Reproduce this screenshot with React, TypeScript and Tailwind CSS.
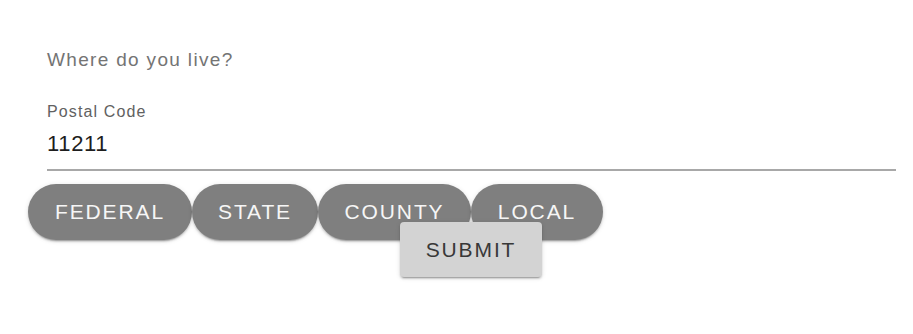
import React from "react";

// 레벨 선택 버튼 목록
const levels: string[] = ["FEDERAL", "STATE", "COUNTY", "LOCAL"];

const pillWidths: Record<string, string> = {
  FEDERAL: "w-[164px]",
  STATE: "w-[126px]",
  COUNTY: "w-[153px]",
  LOCAL: "w-[132px]",
};

const App: React.FC = () => {
  return (
    <div className="min-h-[334px] w-[913px] bg-white font-['Liberation_Sans',Arial,sans-serif]">
      <div className="pt-[48px] pl-[47px] pr-[17px]">
        <p className="text-[19px] leading-[24px] tracking-[0.07em] text-[#747474]">
          Where do you live?
        </p>

        {/* 우편번호 입력 */}
        <div className="mt-[30px] border-b-2 border-[#a8a8a8] pb-[12px]">
          <label className="block text-[16px] leading-[20px] tracking-[0.07em] text-[#616161]">
            Postal Code
          </label>
          <div className="mt-[8px] text-[22px] leading-[27px] tracking-[0.03em] text-[#1e1e1e]">11211</div>
        </div>
      </div>

      <div className="relative pl-[28px] pt-[13px]">
        <div className="flex">
          {levels.map((level) => (
            <button
              key={level}
              className={`${pillWidths[level]} flex h-[56px] items-center justify-center rounded-full bg-[#7f7f7f] text-[21px] tracking-[0.09em] text-[#f6f6f6] shadow-[0_3px_1px_-2px_rgba(0,0,0,0.2),0_2px_2px_0_rgba(0,0,0,0.14),0_1px_5px_0_rgba(0,0,0,0.12)]`}
            >
              {level}
            </button>
          ))}
        </div>

        {/* 제출 버튼 - 위에 겹쳐 있음 */}
        <button className="absolute left-[400px] top-[51px] flex h-[55px] w-[142px] items-center justify-center rounded-[4px] bg-[#d3d3d3] text-[21px] tracking-[0.09em] text-[#383838] shadow-[0_3px_1px_-2px_rgba(0,0,0,0.2),0_2px_2px_0_rgba(0,0,0,0.14),0_1px_5px_0_rgba(0,0,0,0.12)]">
          SUBMIT
        </button>
      </div>
    </div>
  );
};

export default App;
